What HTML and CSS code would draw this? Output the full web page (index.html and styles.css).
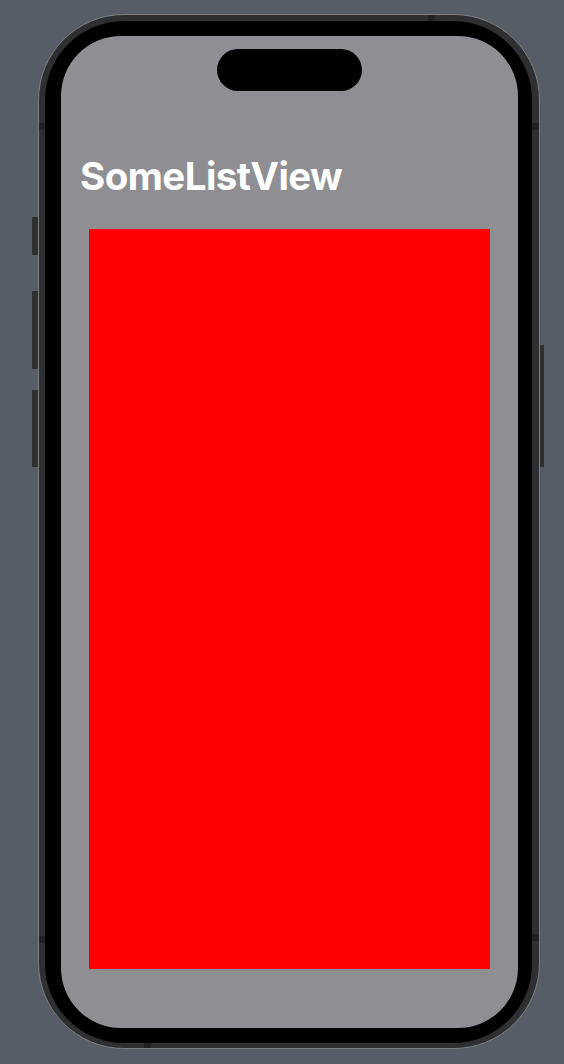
FILE: index.html
```html
<!DOCTYPE html>
<html lang="en">
<head>
<meta charset="utf-8">
<title>SomeListView</title>
<link rel="stylesheet" href="styles.css">
</head>
<body>
<div class="device">
  <span class="btn btn-action"></span>
  <span class="btn btn-vol-up"></span>
  <span class="btn btn-vol-down"></span>
  <span class="btn btn-power"></span>
  <span class="ant ant-top"></span>
  <span class="ant ant-bottom"></span>
  <span class="ant ant-left"></span>
  <span class="ant ant-right"></span>
  <span class="ant ant-left-low"></span>
  <span class="ant ant-right-low"></span>
  <div class="bezel">
    <div class="screen">
      <div class="island"></div>
      <h1 class="title">SomeListView</h1>
      <div class="content"></div>
    </div>
  </div>
</div>
</body>
</html>
```

FILE: styles.css
```css
html, body {
  margin: 0;
  padding: 0;
}
body {
  background: #565d66;
  width: 564px;
  height: 1064px;
  overflow: hidden;
  font-family: Inter, "Liberation Sans", sans-serif;
}
.device {
  position: relative;
  box-sizing: border-box;
  margin: 14px 0 0 38px;
  width: 502px;
  height: 1035px;
  border-radius: 86px;
  background: #2f2f31;
  border: 1px solid #7d7f82;
  padding: 6px 7px 5px 6px;
}
.bezel {
  position: relative;
  z-index: 1;
  box-sizing: border-box;
  height: 100%;
  border-radius: 79px;
  background: #000;
  padding: 15px 14px 15px 16px;
}
.screen {
  height: 100%;
  border-radius: 60px;
  background: #8e8e93;
  display: flex;
  flex-direction: column;
  overflow: hidden;
}
.island {
  align-self: center;
  width: 145px;
  height: 42px;
  margin-top: 13px;
  border-radius: 21px;
  background: #000;
  flex: none;
}
.title {
  margin: 62px 0 0 19px;
  font-size: 38.5px;
  line-height: 47px;
  font-weight: 700;
  color: #fff;
  letter-spacing: -0.55px;
  flex: none;
}
.content {
  margin: 29px 28px 0 28px;
  height: 740px;
  background: #ff0000;
  flex: none;
}
.btn {
  position: absolute;
  background: #2e2f31;
  border-radius: 1px;
}
.btn-action { left: -7px; top: 202px; width: 6px; height: 38px; }
.btn-vol-up { left: -7px; top: 276px; width: 6px; height: 78px; }
.btn-vol-down { left: -7px; top: 375px; width: 6px; height: 77px; }
.btn-power { right: -5px; top: 330px; width: 4px; height: 122px; }
.ant {
  position: absolute;
  background: #222224;
}
.ant-top { top: 0; left: 389px; width: 7px; height: 6px; }
.ant-bottom { bottom: 0; left: 105px; width: 7px; height: 5px; }
.ant-left { left: 0; top: 108px; width: 6px; height: 7px; }
.ant-right { right: 0; top: 108px; width: 7px; height: 7px; }
.ant-left-low { left: 0; top: 921px; width: 6px; height: 7px; }
.ant-right-low { right: 0; top: 919px; width: 7px; height: 7px; }
```
